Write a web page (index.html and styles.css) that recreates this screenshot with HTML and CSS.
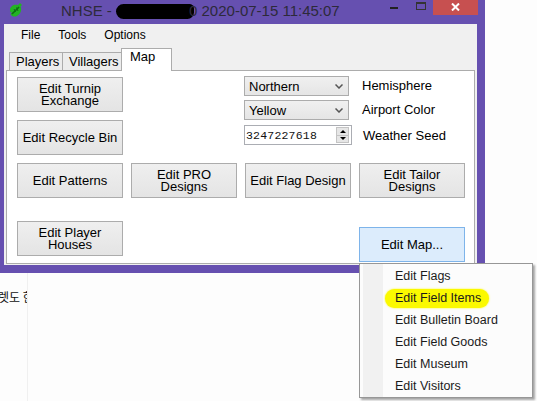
FILE: index.html
```html
<!DOCTYPE html>
<html lang="en">
<head>
    <meta charset="UTF-8">
    <meta name="viewport" content="width=device-width, initial-scale=1.0">
    <title>NHSE</title>
    <link rel="stylesheet" href="styles.css">
</head>
<body>
    <div class="desktop">
        <div class="window">
            <div class="titlebar">
                <svg class="app-icon" width="16" height="15" viewBox="0 0 16 15">
                    <path d="M2 7 C2 3 6 1 10 2 L12 0 L14 2 L12.5 3.5 C14 6 13 11 9 13 C6 14.5 3 13 2.5 11 L4 9.5 L2.2 9.2 Z" fill="#22b322"/>
                    <path d="M4 11 L11 4" stroke="#0d6e12" stroke-width="1.6" fill="none"/>
                    <path d="M6 6 L7.5 9 M8.5 4.5 L10 8" stroke="#0d6e12" stroke-width="1" fill="none"/>
                </svg>
                <span class="title">NHSE - <span class="redact"></span>0 2020-07-15 11:45:07</span>
                <div class="caption-buttons">
                    <div class="cap-btn"><span class="min-glyph"></span></div>
                    <div class="cap-btn"><span class="max-glyph"></span></div>
                    <div class="cap-btn close">
                        <svg width="9" height="8" viewBox="0 0 9 8">
                            <path d="M1 0.5 L8 7.5 M8 0.5 L1 7.5" stroke="#fff" stroke-width="2"/>
                        </svg>
                    </div>
                </div>
            </div>

            <div class="client">
                <div class="menubar">
                    <span>File</span>
                    <span>Tools</span>
                    <span>Options</span>
                </div>

                <div class="tabs">
                    <div class="tab-strip">
                        <div class="tab">Players</div>
                        <div class="tab">Villagers</div>
                        <div class="tab active">Map</div>
                    </div>

                    <div class="tab-page">
                        <button class="btn row-1">Edit Turnip<br>Exchange</button>
                        <button class="btn row-2">Edit Recycle Bin</button>

                        <div class="settings">
                            <div class="combo">Northern <svg class="chev" width="8" height="5" viewBox="0 0 8 5"><path d="M0.5 0.5 L4 4 L7.5 0.5" stroke="#555" stroke-width="1.5" fill="none"/></svg></div>
                            <div class="field-label">Hemisphere</div>
                            <div class="combo">Yellow <svg class="chev" width="8" height="5" viewBox="0 0 8 5"><path d="M0.5 0.5 L4 4 L7.5 0.5" stroke="#555" stroke-width="1.5" fill="none"/></svg></div>
                            <div class="field-label">Airport Color</div>
                            <div class="numeric">
                                <span class="num-value">3247227618</span>
                                <div class="spin">
                                    <span class="spin-up"></span>
                                    <span class="spin-down"></span>
                                </div>
                            </div>
                            <div class="field-label seed">Weather Seed</div>
                        </div>

                        <button class="btn row-3">Edit Patterns</button>
                        <button class="btn row-3">Edit PRO<br>Designs</button>
                        <button class="btn row-3">Edit Flag Design</button>
                        <button class="btn row-3">Edit Tailor<br>Designs</button>

                        <button class="btn row-4">Edit Player<br>Houses</button>
                        <button class="btn row-4 map-btn">Edit Map...</button>
                    </div>
                </div>
            </div>
        </div>

        <div class="below">
            <div class="side-panel">렛도 한</div>
        </div>

        <!-- dropdown of the Edit Map... button -->
        <div class="context-menu">
            <div class="menu-item">Edit Flags</div>
            <div class="menu-item"><span class="marked">Edit Field Items</span></div>
            <div class="menu-item">Edit Bulletin Board</div>
            <div class="menu-item">Edit Field Goods</div>
            <div class="menu-item">Edit Museum</div>
            <div class="menu-item">Edit Visitors</div>
        </div>
    </div>
</body>
</html>
```

FILE: styles.css
```css
body {
    margin: 0;
    background-color: #fdfdfd;
    font-family: "Liberation Sans", Arial, sans-serif;
}
.desktop {
    position: relative;
    width: 537px;
    height: 401px;
    overflow: hidden;
    background-color: #fdfdfd;
}

/* window frame */
.window {
    width: 485px;
    height: 273px;
    box-sizing: border-box;
    padding: 0 8px 8px 4px;
    background-color: #6650b0;
}
.titlebar {
    display: flex;
    align-items: flex-start;
    height: 24px;
    margin-left: -4px;
    margin-right: -8px;
}
.app-icon {
    margin: 3px 0 0 8px;
}
.title {
    margin-left: 37px;
    margin-top: 2px;
    font-size: 15px;
    line-height: 18px;
    color: #2d2a3a;
    white-space: nowrap;
}
.redact {
    display: inline-block;
    width: 78px;
    height: 15px;
    margin-right: -5px;
    vertical-align: -3px;
    background-color: #000;
    border-radius: 8px 5px 7px 8px;
}
.caption-buttons {
    display: flex;
    margin-left: auto;
    margin-right: 7px;
}
.cap-btn {
    width: 26px;
    height: 15px;
}
.min-glyph {
    display: block;
    width: 8px;
    height: 2px;
    margin: 7px 0 0 9px;
    background-color: #222;
}
.max-glyph {
    display: block;
    width: 8px;
    height: 5px;
    margin: 2px 0 0 9px;
    border: 1px solid #333;
    border-top-width: 2px;
}
.cap-btn.close {
    width: 45px;
    background-color: #c75050;
    display: flex;
    justify-content: center;
    padding-top: 3px;
    box-sizing: border-box;
}

/* client area */
.client {
    height: 241px;
    background-color: #f0f0f0;
}
.menubar {
    display: flex;
    height: 22px;
    padding-left: 8px;
    font-size: 12px;
    line-height: 22px;
    color: #000;
}
.menubar span {
    padding: 0 9px;
}
.tabs {
    margin: 0 2px;
}
.tab-strip {
    display: flex;
    align-items: flex-end;
    height: 24px;
    padding-left: 3px;
}
.tab {
    height: 18px;
    padding: 0 6px;
    box-sizing: border-box;
    border: 1px solid #acacac;
    border-bottom: none;
    margin-right: -1px;
    background-color: #ececec;
    font-size: 13px;
    line-height: 18px;
}
.tab:nth-child(1) { width: 54px; }
.tab:nth-child(2) { width: 60px; }
.tab.active {
    position: relative;
    width: 51px;
    height: 23px;
    margin-bottom: -1px;
    padding: 0 8px;
    background-color: #fff;
    line-height: 16px;
    z-index: 1;
}
.tab-page {
    display: grid;
    grid-template-columns: repeat(4, 106px);
    grid-template-rows: 35px 35px 35px 35px;
    column-gap: 8px;
    row-gap: 8px;
    height: 194px;
    box-sizing: border-box;
    padding: 6px 0 0 10px;
    border: 1px solid #acacac;
    background-color: #fff;
}

/* buttons */
.btn {
    height: 35px;
    padding: 0;
    border: 1px solid #acacac;
    background: linear-gradient(#efefef, #e4e4e4);
    font-family: "Liberation Sans", Arial, sans-serif;
    font-size: 13px;
    line-height: 12px;
    color: #000;
}
.btn.row-1 { grid-column: 1; grid-row: 1; }
.btn.row-2 { grid-column: 1; grid-row: 2; }
.btn.row-3 { grid-row: 3; }
.btn.row-4 {
    grid-row: 4;
    margin-top: 15px;
}
.btn.map-btn {
    grid-column: 4;
    margin-top: 21px;
    background: #dcecfc;
    border-color: #7eb4ea;
}

/* combo boxes and numeric field */
.settings {
    grid-column: 3 / 5;
    grid-row: 1 / 3;
    display: grid;
    grid-template-columns: 108px auto;
    grid-auto-rows: 20px;
    column-gap: 10px;
    row-gap: 4px;
    align-items: center;
    align-content: start;
    margin: -1px 0 0 -1px;
}
.combo {
    display: flex;
    align-items: center;
    width: 105px;
    height: 20px;
    box-sizing: border-box;
    padding-left: 4px;
    border: 1px solid #acacac;
    background: linear-gradient(#f0f0f0, #e5e5e5);
    font-size: 13px;
}
.chev {
    margin-left: auto;
    margin-right: 5px;
}
.field-label {
    font-size: 13px;
    line-height: 16px;
    color: #000;
}
.field-label.seed {
    margin-top: 4px;
    margin-left: 1px;
}
.numeric {
    display: flex;
    align-items: center;
    height: 20px;
    margin-top: 2px;
    box-sizing: border-box;
    border: 1px solid #abadb3;
    background-color: #fff;
}
.num-value {
    padding-left: 1px;
    font-family: "Liberation Mono", "Courier New", monospace;
    font-size: 11.5px;
    letter-spacing: 0.2px;
    color: #111;
}
.spin {
    display: flex;
    flex-direction: column;
    margin-left: auto;
    margin-right: 2px;
    width: 13px;
    height: 16px;
    border: 1px solid #c4c4c4;
    background-color: #e6e6e6;
    box-sizing: border-box;
}
.spin span {
    flex: 1;
    display: flex;
    justify-content: center;
    align-items: center;
}
.spin-up {
    border-bottom: 1px solid #c4c4c4;
}
.spin-up::after, .spin-down::after {
    content: "";
    border-left: 3px solid transparent;
    border-right: 3px solid transparent;
}
.spin-up::after {
    border-bottom: 3px solid #000;
}
.spin-down::after {
    border-top: 3px solid #000;
}

/* what shows of the desktop below the window */
.below {
    height: 128px;
}
.side-panel {
    width: 28px;
    height: 128px;
    overflow: hidden;
    white-space: nowrap;
    border-right: 1px solid #f0f0f0;
    padding-top: 15px;
    box-sizing: border-box;
    text-indent: -2px;
    font-family: "Noto Sans CJK KR", sans-serif;
    font-size: 12px;
    color: #111;
}

/* popup menu */
.context-menu {
    position: absolute;
    left: 359px;
    top: 263px;
    width: 174px;
    height: 135px;
    box-sizing: border-box;
    padding-top: 1px;
    border: 1px solid #979797;
    background: linear-gradient(to right, #fcfcfc 0 3px, #f1f1f1 3px 23px, #fcfcfc 23px);
    box-shadow: 2px 2px 2px rgba(0, 0, 0, 0.35);
}
.menu-item {
    height: 22px;
    padding-left: 35px;
    font-size: 12.5px;
    line-height: 22px;
    color: #1b1b1b;
}
.marked {
    display: inline-block;
    margin-left: -10px;
    padding: 0 8px 0 10px;
    line-height: 19px;
    border-radius: 10px;
    background-color: #fbf900;
    box-shadow: 0 0 2px #fbf900;
}
```
